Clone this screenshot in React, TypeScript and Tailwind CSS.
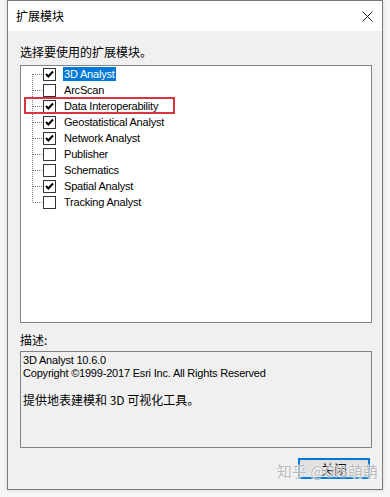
import React from "react";

const items = [
  { name: "3D Analyst", checked: true, selected: true },
  { name: "ArcScan", checked: false },
  { name: "Data Interoperability", checked: true },
  { name: "Geostatistical Analyst", checked: true },
  { name: "Network Analyst", checked: true },
  { name: "Publisher", checked: false },
  { name: "Schematics", checked: false },
  { name: "Spatial Analyst", checked: true },
  { name: "Tracking Analyst", checked: false },
];

function TreeLines({ first, last }: { first: boolean; last: boolean }) {
  return (
    <svg width="22" height="16" className="shrink-0">
      <line
        x1="11.5"
        y1={first ? 8 : 0}
        x2="11.5"
        y2={last ? 8.5 : 16}
        stroke="#808080"
        strokeWidth="1"
        strokeDasharray="1 1"
      />
      <line x1="12" y1="8.5" x2="22" y2="8.5" stroke="#808080" strokeWidth="1" strokeDasharray="1 1" />
    </svg>
  );
}

function Check({ checked }: { checked: boolean }) {
  return (
    <div className="w-[13px] h-[13px] border border-[#333] bg-white shrink-0 flex items-center justify-center">
      {checked && (
        <svg width="11" height="11" viewBox="0 0 11 11">
          <path d="M2 5 L4.3 7.5 L9 2.5" stroke="#000" strokeWidth="2" fill="none" />
        </svg>
      )}
    </div>
  );
}

export default function App() {
  const sans = { fontFamily: '"Liberation Sans", "Noto Sans CJK SC", sans-serif' };
  const cjk = { fontFamily: '"Noto Sans CJK SC", sans-serif' };
  return (
    <div className="w-[390px] h-[497px] bg-[#f6f6f6] pl-[7px]" style={sans}>
      <div className="w-[376px] h-[490px] border border-[#7a7a7a] bg-[#f0f0f0] flex flex-col shadow-[0_0_4px_rgba(0,0,0,0.15)]">
        <div className="h-[30px] bg-white flex items-center justify-between pl-[8px] pr-[9px] shrink-0">
          <span className="text-[12px] text-black" style={cjk}>
            扩展模块
          </span>
          <svg width="11" height="11" viewBox="0 0 11 11">
            <path d="M0.5 0.5 L10.5 10.5 M10.5 0.5 L0.5 10.5" stroke="#222" strokeWidth="1" />
          </svg>
        </div>
        <div className="flex-1 flex flex-col pl-[12px] pr-[10px]">
          <div className="text-[12px] leading-[16px] text-black mt-[13px] h-[21px]" style={cjk}>
            选择要使用的扩展模块。
          </div>
          <div className="relative w-[352px] h-[258px] border border-[#828282] bg-white">
            <div className="flex flex-col">
              {items.map((it, i) => (
                <div key={it.name} className="h-[16px] flex items-center">
                  <div className="w-[22px]">
                    <TreeLines first={i === 0} last={i === items.length - 1} />
                  </div>
                  <Check checked={it.checked} />
                  <span
                    className={
                      "ml-[7px] px-[1px] text-[11px] tracking-[-0.2px] leading-[14px] h-[14px] " +
                      (it.selected ? "bg-[#0078d7] text-white" : "text-black")
                    }
                  >
                    {it.name}
                  </span>
                </div>
              ))}
            </div>
            <div className="absolute left-[3px] top-[31px] w-[151px] h-[17px] border-2 border-[#d8343d]" />
          </div>
          <div className="text-[12px] leading-[16px] text-black mt-[9px] h-[19px]" style={cjk}>
            描述:
          </div>
          <div className="w-[352px] h-[97px] border border-[#828282] bg-[#f0f0f0] px-[2px] pt-[2px] text-[11px] tracking-[-0.2px] leading-[13px] text-black">
            <div>3D Analyst 10.6.0</div>
            <div>Copyright ©1999-2017 Esri Inc. All Rights Reserved</div>
            <div className="mt-[13px] text-[12px] tracking-normal" style={cjk}>
              提供地表建模和 3D 可视化工具。
            </div>
          </div>
          <div className="flex justify-end mt-[10px] pr-[2px] relative">
            <div
              className="w-[72px] h-[21px] border-2 border-[#0078d7] bg-[#e1e1e1] flex items-center justify-center text-[13px] text-black"
              style={cjk}
            >
              关闭
            </div>
            <div
              className="absolute right-[-6px] top-[4px] text-[15px] leading-[18px] text-[#b8b8b8] whitespace-nowrap"
              style={{ ...cjk, textShadow: "0 0 2px #fff, 0 0 2px #fff" }}
            >
              知乎 @GIS萌萌
            </div>
          </div>
        </div>
      </div>
    </div>
  );
}
